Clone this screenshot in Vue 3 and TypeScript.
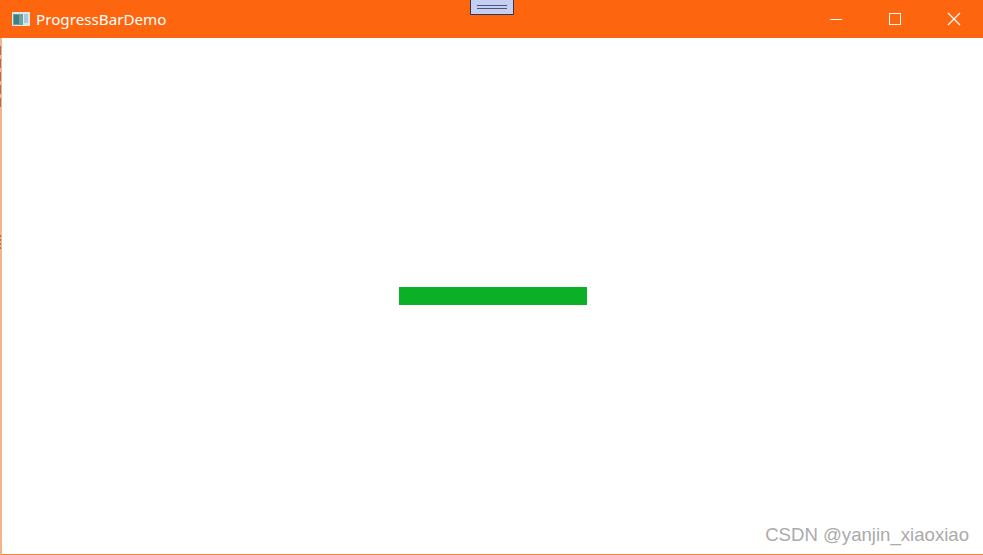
<script setup lang="ts">
const title = "ProgressBarDemo";
const watermark = "CSDN @yanjin_xiaoxiao";
</script>

<template>
  <div class="window">
    <header class="titlebar">
      <div class="title-left">
        <svg class="app-icon" width="18" height="14" viewBox="0 0 18 14">
          <rect x="0" y="0" width="18" height="14" fill="#dfe6ea" />
          <rect x="1" y="2" width="10" height="11" fill="#6fa3a0" />
          <rect x="2" y="3" width="5" height="9" fill="#3f8080" />
          <rect x="12" y="2" width="4" height="9" fill="#a9c6dc" />
        </svg>
        <span class="title">{{ title }}</span>
      </div>
      <div class="adorner"><span class="grip"></span></div>
      <div class="controls">
        <svg width="14" height="14" viewBox="0 0 14 14" class="ctl ctl-min"><path d="M1 7.5H13" stroke="#fff" fill="none" /></svg>
        <svg width="14" height="14" viewBox="0 0 14 14" class="ctl ctl-max"><rect x="1.5" y="1.5" width="11" height="11" stroke="#fff" fill="none" /></svg>
        <svg width="14" height="14" viewBox="0 0 14 14" class="ctl ctl-close"><path d="M1 1L13 13M13 1L1 13" stroke="#fff" stroke-width="1.2" fill="none" /></svg>
      </div>
    </header>
    <main class="content">
      <span class="edge-marks edge-marks-top"></span>
      <span class="edge-marks edge-marks-mid"></span>
      <div class="bar"></div>
      <span class="watermark">{{ watermark }}</span>
    </main>
  </div>
</template>

<style scoped>
.window {
  width: 983px;
  height: 555px;
  box-sizing: border-box;
  display: flex;
  flex-direction: column;
  background: #fff;
  border-left: 2px solid #f4b48a;
  border-bottom: 1px solid #e8863f;
  position: relative;
  font-family: "Noto Sans", "Open Sans", sans-serif;
}
.titlebar {
  height: 38px;
  margin-left: -2px;
  background: #fd650e;
  display: flex;
  align-items: center;
  justify-content: space-between;
  position: relative;
  flex: none;
}
.title-left {
  display: flex;
  align-items: center;
  gap: 6px;
  padding-left: 12px;
}
.app-icon {
  display: block;
}
.title {
  color: #fff;
  font-size: 15.2px;
  line-height: 20px;
}
.adorner {
  position: absolute;
  left: 470px;
  top: 0;
  width: 44px;
  height: 15px;
  box-sizing: border-box;
  background: #c5cff0;
  border: 1px solid #33355c;
  border-top: none;
  display: flex;
  align-items: center;
  justify-content: center;
}
.grip {
  display: block;
  width: 30px;
  height: 2px;
  border-top: 1.5px solid #4a5585;
  border-bottom: 1.5px solid #4a5585;
}
.controls {
  display: flex;
  align-items: center;
}
.ctl {
  display: block;
}
.ctl-min {
  margin-right: 45px;
}
.ctl-max {
  margin-right: 45px;
}
.ctl-close {
  margin-right: 22px;
}
.content {
  flex: 1;
  display: flex;
  align-items: center;
  justify-content: center;
  position: relative;
}
.edge-marks {
  position: absolute;
  left: -2px;
  width: 1px;
}
.edge-marks-top {
  top: 8px;
  height: 62px;
  background: repeating-linear-gradient(to bottom, #a8705a 0 9px, #f4b48a 9px 13px);
}
.edge-marks-mid {
  top: 197px;
  height: 16px;
  background: repeating-linear-gradient(to bottom, #a8705a 0 2px, #f4b48a 2px 4px);
}
.bar {
  width: 188px;
  height: 18px;
  background: #0bb027;
}
.watermark {
  position: absolute;
  right: 14px;
  bottom: 8px;
  font-family: "Liberation Sans", Arial, sans-serif;
  font-size: 18.6px;
  line-height: 22px;
  color: #ababab;
}
</style>
